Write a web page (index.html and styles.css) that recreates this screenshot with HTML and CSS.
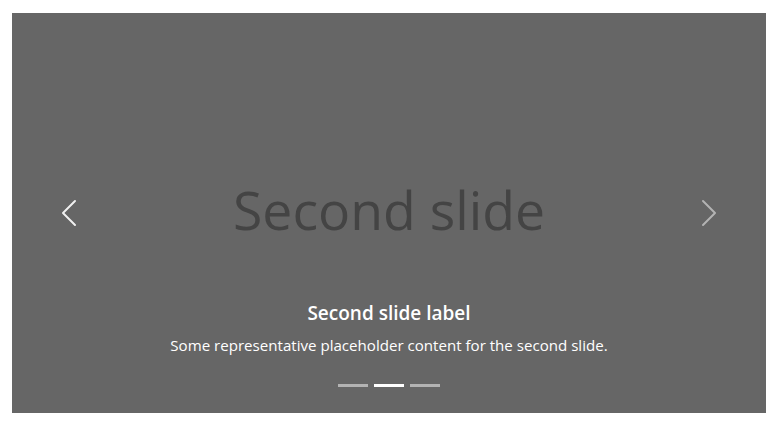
FILE: index.html
```html
<!DOCTYPE html>
<html lang="en">
<head>
<meta charset="utf-8">
<title>Carousel</title>
<link rel="stylesheet" href="styles.css">
</head>
<body>
<div class="page">
  <div class="carousel">
    <div class="slide">
      <span class="slide-text">Second slide</span>
    </div>
    <div class="indicators">
      <button class="indicator" aria-label="Slide 1"></button>
      <button class="indicator active" aria-label="Slide 2"></button>
      <button class="indicator" aria-label="Slide 3"></button>
    </div>
    <div class="caption">
      <h5 class="caption-title">Second slide label</h5>
      <p class="caption-text">Some representative placeholder content for the second slide.</p>
    </div>
    <button class="control control-prev" aria-label="Previous">
      <svg class="control-icon" viewBox="0 0 16 16" width="32" height="32"><path fill="#fff" d="M11.354 1.646a.5.5 0 0 1 0 .708L5.707 8l5.647 5.646a.5.5 0 0 1-.708.708l-6-6a.5.5 0 0 1 0-.708l6-6a.5.5 0 0 1 .708 0z"/></svg>
    </button>
    <button class="control control-next" aria-label="Next">
      <svg class="control-icon" viewBox="0 0 16 16" width="32" height="32"><path fill="#fff" d="M4.646 1.646a.5.5 0 0 1 .708 0l6 6a.5.5 0 0 1 0 .708l-6 6a.5.5 0 0 1-.708-.708L10.293 8 4.646 2.354a.5.5 0 0 1 0-.708z"/></svg>
    </button>
  </div>
</div>
</body>
</html>
```
FILE: styles.css
```css
* { box-sizing: border-box; }
html, body { margin: 0; padding: 0; background: #fff; }
body { font-family: "Open Sans", "Noto Sans", sans-serif; }
.page { padding: 13px 12px; }
.carousel {
  position: relative;
  width: 754px;
  height: 400px;
  overflow: hidden;
}
.slide {
  height: 400px;
  background: #666;
  display: flex;
  align-items: center;
  justify-content: center;
}
.slide-text {
  color: #444;
  font-size: 53.5px;
  line-height: 1;
  padding-bottom: 6px;
}
.indicators {
  position: absolute;
  left: 15%;
  right: 15%;
  bottom: 0;
  margin-bottom: 16px;
  display: flex;
  justify-content: center;
  z-index: 2;
}
.indicator {
  box-sizing: content-box;
  width: 30px;
  height: 3px;
  padding: 0;
  margin: 0 3px;
  background: #fff;
  background-clip: padding-box;
  border: 0;
  border-top: 10px solid transparent;
  border-bottom: 10px solid transparent;
  opacity: .5;
}
.indicator.active { opacity: 1; }
.caption {
  position: absolute;
  left: 15%;
  right: 15%;
  bottom: 20px;
  padding: 20px 0;
  color: #fff;
  text-align: center;
}
.caption-title {
  margin: 0 0 8px;
  font-size: 19px;
  font-weight: 600;
  line-height: 24px;
}
.caption-text {
  margin: 0 0 16px;
  font-size: 15.1px;
  line-height: 24px;
}
.control {
  position: absolute;
  top: 0;
  bottom: 0;
  width: 15%;
  padding: 0;
  border: 0;
  background: none;
  display: flex;
  align-items: center;
  justify-content: center;
  opacity: .5;
}
.control-prev { left: 0; opacity: .9; }
.control-next { right: 0; }
.control-icon { display: block; }
```
